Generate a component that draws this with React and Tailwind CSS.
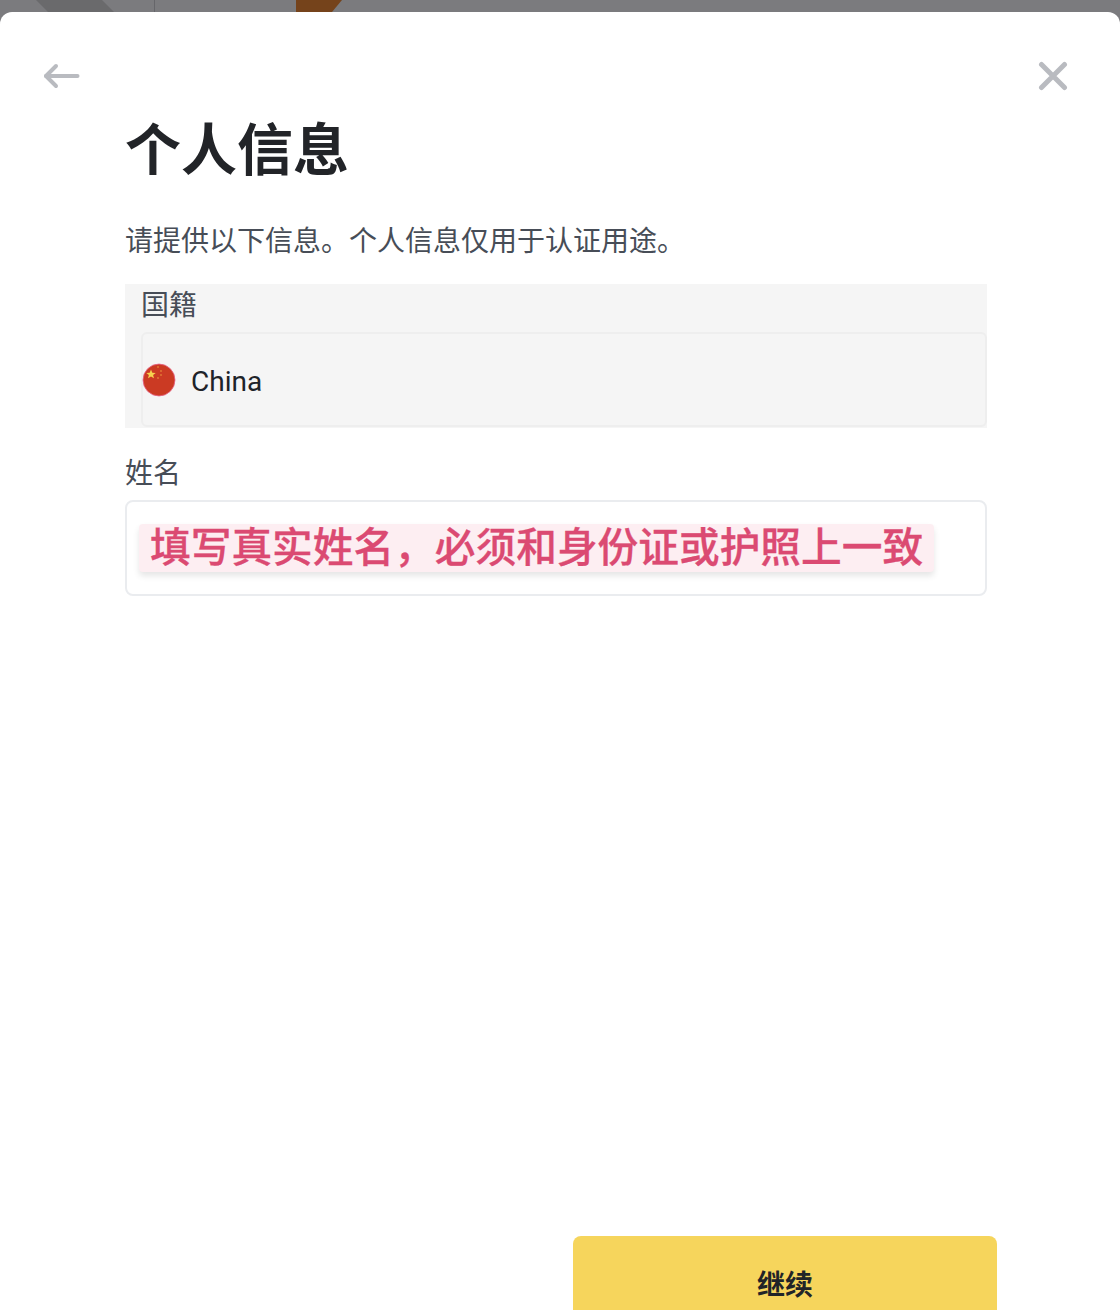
import React from 'react'

const cjk = "font-['Inter','Noto_Sans_CJK_SC',sans-serif]"

function ChinaFlag() {
  return (
    <svg width="34" height="34" viewBox="0 0 34 34" className="ml-[-1px] shrink-0">
      <circle cx="17" cy="17" r="16" fill="#cb3a23" stroke="#e8668a" strokeWidth="0.8" />
      <path d="M9 6.5l1.3 3.2 3.4.2-2.6 2.1.9 3.3L9 13.5l-3 1.8.9-3.3-2.6-2.1 3.4-.2z" fill="#f6d24f" />
      <circle cx="16" cy="4" r="0.8" fill="#f0a040" />
      <circle cx="19" cy="8" r="0.8" fill="#f0a040" />
      <circle cx="19" cy="12" r="0.8" fill="#f0a040" />
      <circle cx="16" cy="15" r="0.8" fill="#f0a040" />
    </svg>
  )
}

export default function App() {
  return (
    <div className={`relative h-[1310px] w-[1120px] overflow-hidden bg-[#7b7b7e] ${cjk}`}>
      {/* blurred page behind the modal */}
      <svg width="1120" height="12" className="block">
        <path d="M36 0h66l12 12H48z" fill="#6a6a6c" />
        <rect x="154" y="0" width="1" height="12" fill="#66666a" />
        <path d="M296 0h46l-10 12h-36z" fill="#75431b" />
      </svg>

      <div className="h-[1298px] overflow-hidden rounded-t-[12px] bg-white">
        {/* top bar */}
        <div className="flex h-[78px] items-center justify-between pt-[50px] pl-[43px] pr-[52px]">
          <svg width="38" height="26" viewBox="0 0 38 26" fill="none" stroke="#b9bbc0" strokeWidth="4" strokeLinecap="round">
            <path d="M3 13H34.5" />
            <path d="M13 3L3 13l10 10" strokeLinejoin="round" />
          </svg>
          <svg width="30" height="30" viewBox="0 0 30 30" fill="none" stroke="#b9bbc0" strokeWidth="5" strokeLinecap="round">
            <path d="M3.5 3.5l23 23M26.5 3.5l-23 23" />
          </svg>
        </div>

        <div className="pl-[125px] pr-[133px]">
          <h1 className="mt-[26px] h-[68px] text-[56px] font-bold leading-[68px] text-[#222428]">个人信息</h1>
          <p className="mt-[37px] h-[40px] text-[28px] leading-[40px] text-[#474d57]">请提供以下信息。个人信息仅用于认证用途。</p>

          {/* nationality, locked */}
          <div className="mt-[23px] h-[144px] bg-[#f5f5f5] pl-[16px]">
            <div className="h-[48px] text-[28px] leading-[42px] text-[#474d57]">国籍</div>
            <div className="flex h-[95px] items-center rounded-[6px] border-2 border-[#eeeeee]">
              <ChinaFlag />
              <span className="ml-[15px] mt-[4px] font-['Roboto','Noto_Sans_CJK_SC',sans-serif] text-[28px] text-[#1e2329]">China</span>
            </div>
          </div>

          {/* name */}
          <div className="mt-[25px] h-[47px] text-[28px] leading-[40px] text-[#474d57]">姓名</div>
          <div className="flex h-[96px] items-center rounded-[8px] border-2 border-[#eaecef] pl-[12px]">
            <div className="flex h-[48px] w-[795px] items-center rounded-[4px] bg-[#fdeef2] pl-[11px] text-[40.7px] font-medium whitespace-nowrap text-[#db4a72] shadow-[0_4px_6px_rgba(0,0,0,0.1)] [-webkit-text-stroke:0.3px_#db4a72]">
              填写真实姓名，必须和身份证或护照上一致
            </div>
          </div>
        </div>

        {/* continue */}
        <div className="mt-[640px] pl-[573px]">
          <button className="flex h-[96px] w-[424px] items-center justify-center rounded-[8px] bg-[#f6d55c] pt-[2px] text-[28px] font-bold text-[#212428]">
            继续
          </button>
        </div>
      </div>
    </div>
  )
}
